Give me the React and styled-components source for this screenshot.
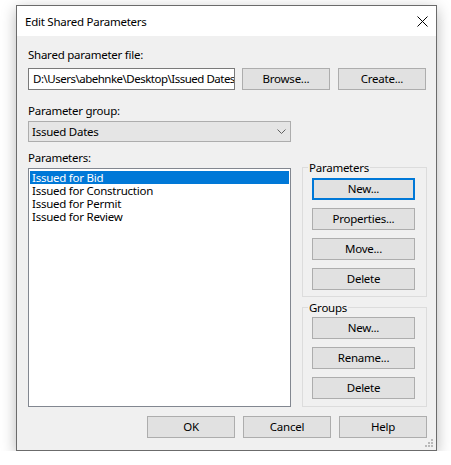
import React from 'react';
import styled, { createGlobalStyle } from 'styled-components';

const GlobalStyle = createGlobalStyle`
  html, body {
    margin: 0;
    padding: 0;
    background: #ffffff;
  }
  body {
    font-family: "Noto Sans", "Open Sans", sans-serif;
    font-size: 11.5px;
    letter-spacing: -0.25px;
    color: #000;
  }
  button {
    letter-spacing: inherit;
  }
`;

const Window = styled.div`
  box-sizing: border-box;
  margin: 5px 0 0 16px;
  width: 421px;
  height: 446px;
  border: 1px solid #6b6b6b;
  background: #f0f0f0;
  box-shadow: 0 4px 14px rgba(0, 0, 0, 0.28);
  display: flex;
  flex-direction: column;
  position: relative;
`;

const TitleBar = styled.div`
  height: 30px;
  background: #ffffff;
  display: flex;
  align-items: center;
  justify-content: space-between;
  padding: 0 8px 0 8px;
  flex-shrink: 0;
`;

const Title = styled.span`
  font-size: 11.5px;
  line-height: 16px;
  margin-top: 1px;
`;

const CloseButton = styled.button`
  border: none;
  background: transparent;
  padding: 0;
  width: 11px;
  height: 11px;
  display: flex;
  align-items: center;
  justify-content: center;
  margin-top: 1px;
`;

const Body = styled.div`
  flex: 1;
  padding: 11px 9px 0 11px;
  display: flex;
  flex-direction: column;
`;

const Label = styled.div`
  line-height: 16px;
  height: 16px;
  margin-top: ${p => p.$top || 0}px;
  margin-bottom: ${p => p.$bottom || 0}px;
  white-space: nowrap;
`;

const Row = styled.div`
  display: flex;
  align-items: stretch;
  justify-content: ${p => (p.$end ? 'flex-end' : 'flex-start')};
  margin-top: ${p => p.$top || 0}px;
  gap: 8px;
`;

const TextBox = styled.div`
  box-sizing: border-box;
  width: 207px;
  height: 22px;
  background: #ffffff;
  border: 1px solid #7a7a7a;
  padding: 0 3px 0 4px;
  line-height: 20px;
  letter-spacing: -0.5px;
  white-space: nowrap;
  overflow: hidden;
  margin-right: -1px;
`;

const Button = styled.button`
  box-sizing: border-box;
  width: ${p => p.$w || 88}px;
  height: 22px;
  padding: 0;
  background: #e1e1e1;
  border: ${p => (p.$focus ? '2px solid #0078d7' : '1px solid #adadad')};
  font-family: inherit;
  font-size: 11.5px;
  line-height: 18px;
  color: #000;
  text-align: center;
`;

const Select = styled.div`
  box-sizing: border-box;
  width: 263px;
  height: 21px;
  margin-top: 2px;
  background: #e5e5e5;
  border: 1px solid #adadad;
  display: flex;
  align-items: center;
  justify-content: space-between;
  padding: 0 4px 0 3px;
`;

const Main = styled.div`
  display: grid;
  grid-template-columns: 263px 125px;
  column-gap: 11px;
`;

const Column = styled.div`
  display: flex;
  flex-direction: column;
`;

const ListBox = styled.ul`
  box-sizing: border-box;
  list-style: none;
  margin: 2px 0 0;
  height: 239px;
  background: #ffffff;
  border: 1px solid #828790;
  padding: 2px 1px;
`;

const ListItem = styled.li`
  height: 13px;
  line-height: 13px;
  padding-left: 2px;
  white-space: nowrap;
  background: ${p => (p.$selected ? '#0078d7' : 'transparent')};
  color: ${p => (p.$selected ? '#ffffff' : '#000')};
`;

const Group = styled.fieldset`
  box-sizing: border-box;
  margin: ${p => p.$top || 0}px 0 0;
  border: 1px solid #dcdcdc;
  padding: ${p => p.$padTop || 0}px 11px ${p => p.$padBottom || 0}px 9px;
  display: flex;
  flex-direction: column;
  gap: 8px;
  min-width: 0;
`;

const Legend = styled.legend`
  padding: 0 1px;
  margin-left: -4px;
  line-height: 15px;
  height: 15px;
`;

const Grip = styled.svg`
  position: absolute;
  right: 2px;
  bottom: 2px;
`;

function CloseIcon() {
  return (
    <svg width="11" height="11" viewBox="0 0 11 11">
      <path d="M0.5 0.5 L10.5 10.5 M10.5 0.5 L0.5 10.5" stroke="#000" strokeWidth="1" fill="none" />
    </svg>
  );
}

function Chevron() {
  return (
    <svg width="9" height="5" viewBox="0 0 9 5">
      <path d="M0.5 0.5 L4.5 4.5 L8.5 0.5" stroke="#606060" strokeWidth="1" fill="none" />
    </svg>
  );
}

const params = [
  'Issued for Bid',
  'Issued for Construction',
  'Issued for Permit',
  'Issued for Review',
];

export default function App() {
  return (
    <>
      <GlobalStyle />
      <Window>
        <TitleBar>
          <Title>Edit Shared Parameters</Title>
          <CloseButton aria-label="Close">
            <CloseIcon />
          </CloseButton>
        </TitleBar>
        <Body>
          <Label $bottom={5}>Shared parameter file:</Label>
          <Row>
            <TextBox>D:\Users\abehnke\Desktop\Issued Dates</TextBox>
            <Button>Browse...</Button>
            <Button>Create...</Button>
          </Row>

          <Label $top={13}>Parameter group:</Label>
          <Select>
            <span>Issued Dates</span>
            <Chevron />
          </Select>

          <Main>
            <Column>
              <Label $top={8}>Parameters:</Label>
              <ListBox>
                {params.map((p, i) => (
                  <ListItem key={p} $selected={i === 0}>{p}</ListItem>
                ))}
              </ListBox>
            </Column>
            <Column>
              <Group $top={18} $padTop={3} $padBottom={6}>
                <Legend>Parameters</Legend>
                <Button $w={103} $focus>New...</Button>
                <Button $w={103}>Properties...</Button>
                <Button $w={103}>Move...</Button>
                <Button $w={103}>Delete</Button>
              </Group>
              <Group $top={3} $padTop={2} $padBottom={7}>
                <Legend>Groups</Legend>
                <Button $w={103}>New...</Button>
                <Button $w={103}>Rename...</Button>
                <Button $w={103}>Delete</Button>
              </Group>
            </Column>
          </Main>

          <Row $end $top={9}>
            <Button>OK</Button>
            <Button>Cancel</Button>
            <Button>Help</Button>
          </Row>
        </Body>
        <Grip width="10" height="10" viewBox="0 0 10 10">
          {[[7, 1], [4, 4], [7, 4], [1, 7], [4, 7], [7, 7]].map(([x, y]) => (
            <rect key={`${x}-${y}`} x={x} y={y} width="2" height="2" fill="#b9b9b9" />
          ))}
        </Grip>
      </Window>
    </>
  );
}
